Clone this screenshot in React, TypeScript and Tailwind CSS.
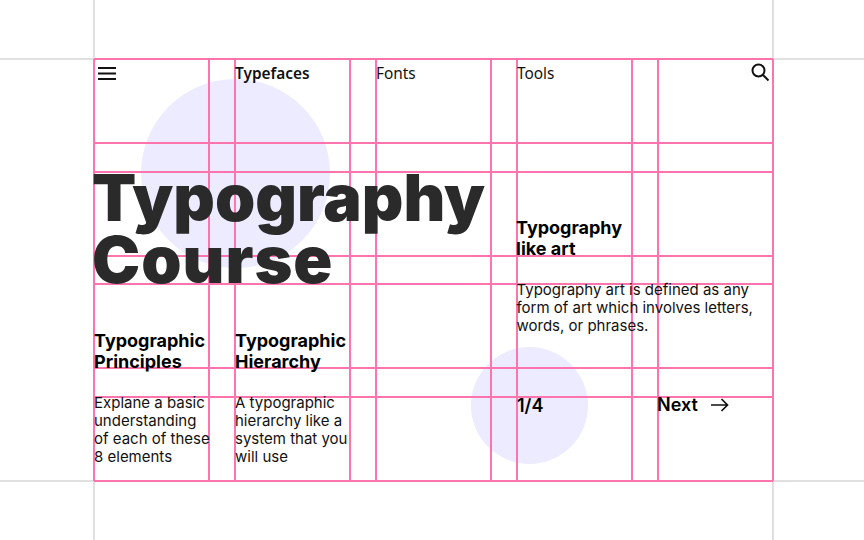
const columnLines = [
  "col-start-1 col-end-2",
  "col-start-3 col-end-4",
  "col-start-5 col-end-6",
  "col-start-7 col-end-8",
  "col-start-9 col-end-10",
];
const rowLines = ["row-start-1 row-end-2", "row-start-3 row-end-4", "row-start-5 row-end-6", "row-start-7 row-end-8"];

export default function App() {
  return (
    <div className="relative w-[864px] h-[540px] overflow-hidden bg-white pl-[94px] pt-[59px] font-['Inter',sans-serif] text-black">
      <div className="absolute left-[93px] top-0 h-full w-[2px] bg-[#e0e0e0]" />
      <div className="absolute left-[772px] top-0 h-full w-[2px] bg-[#e0e0e0]" />
      <div className="absolute left-0 top-[58px] h-[2px] w-full bg-[#e0e0e0]" />
      <div className="absolute left-0 top-[480px] h-[2px] w-full bg-[#e0e0e0]" />
      <div className="absolute left-[141px] top-[79px] h-[189px] w-[189px] rounded-full bg-[#ecebff]" />
      <div className="absolute left-[471px] top-[347px] h-[117px] w-[117px] rounded-full bg-[#ecebff]" />

      <div className="relative grid h-[422px] w-[679px] grid-cols-[repeat(4,115px_26px)_115px] grid-rows-[repeat(3,84px_28.5px)_84px]">
        {columnLines.map((c) => (
          <div key={c} className={`${c} row-start-1 row-end-8 -mx-px pointer-events-none border-x-2 border-[#ff74ad]`} />
        ))}
        {rowLines.map((r) => (
          <div key={r} className={`${r} col-start-1 col-end-10 -my-px pointer-events-none border-y-2 border-[#ff74ad]`} />
        ))}

        <div className="relative col-start-1 row-start-1 pl-[4px] pt-[4px]">
          <svg width="20" height="20" viewBox="0 0 20 20" fill="none" stroke="#111" strokeWidth="2">
            <path d="M0 5h18M0 10.5h18M0 16h18" />
          </svg>
        </div>
        <div className="relative col-start-3 row-start-1 font-['Noto_Sans',sans-serif] text-[15.4px] font-semibold leading-[30px] text-[#111]">Typefaces</div>
        <div className="relative col-start-5 row-start-1 font-['Noto_Sans',sans-serif] text-[15.4px] leading-[30px] text-[#111]">Fonts</div>
        <div className="relative col-start-7 row-start-1 font-['Noto_Sans',sans-serif] text-[15.4px] leading-[30px] text-[#111]">Tools</div>
        <div className="relative col-start-9 row-start-1 flex justify-end pr-[2px] pt-[4px]">
          <svg width="20" height="20" viewBox="0 0 20 20" fill="none" stroke="#111" strokeWidth="2">
            <circle cx="7.5" cy="7.5" r="6" />
            <path d="M11.8 11.8l5.7 5.7" />
          </svg>
        </div>

        <h1 className="relative col-start-1 col-end-8 row-start-3 row-end-5 -ml-[2px] -mt-[5px] whitespace-nowrap text-[64.5px] font-black leading-[62.5px] text-[#2a2a2a]">
          Typography
          <br />
          <span className="tracking-[1px]">Course</span>
        </h1>

        <h2 className="relative col-start-7 col-end-10 row-start-3 -mb-[3px] -ml-px self-end text-[18px] font-bold leading-[21px]">
          Typography
          <br />
          like art
        </h2>
        <p className="relative col-start-7 col-end-10 row-start-5 -ml-[0.5px] -mt-[3px] text-[15px] leading-[18px] text-[#111]">
          Typography art is defined as any
          <br />
          form of art which involves letters,
          <br />
          words, or phrases.
        </p>

        <h2 className="relative col-start-1 col-end-3 row-start-5 -mb-[4px] self-end text-[18px] font-bold leading-[20.5px]">
          Typographic
          <br />
          Principles
        </h2>
        <h2 className="relative col-start-3 col-end-5 row-start-5 -mb-[4px] self-end text-[18px] font-bold leading-[20.5px]">
          Typographic
          <br />
          Hierarchy
        </h2>
        <p className="relative col-start-1 col-end-3 row-start-7 -mt-[3px] whitespace-nowrap text-[15px] leading-[18px] text-[#111]">
          Explane a basic
          <br />
          understanding
          <br />
          of each of these
          <br />8 elements
        </p>
        <p className="relative col-start-3 col-end-5 row-start-7 -mt-[3px] whitespace-nowrap text-[15px] leading-[18px] text-[#111]">
          A typographic
          <br />
          hierarchy like a
          <br />
          system that you
          <br />
          will use
        </p>

        <div className="relative col-start-7 row-start-7 pt-px text-[18px] font-semibold leading-[16px]">1/4</div>
        <div className="relative col-start-9 row-start-7 -ml-px flex items-start gap-[13px] text-[18px] font-semibold leading-[16px]">
          <span>Next</span>
          <svg width="18" height="16" viewBox="0 0 18 16" fill="none" stroke="#111" strokeWidth="1.7">
            <path d="M0 8h16.5M10.5 2l6 6-6 6" />
          </svg>
        </div>
      </div>
    </div>
  );
}
